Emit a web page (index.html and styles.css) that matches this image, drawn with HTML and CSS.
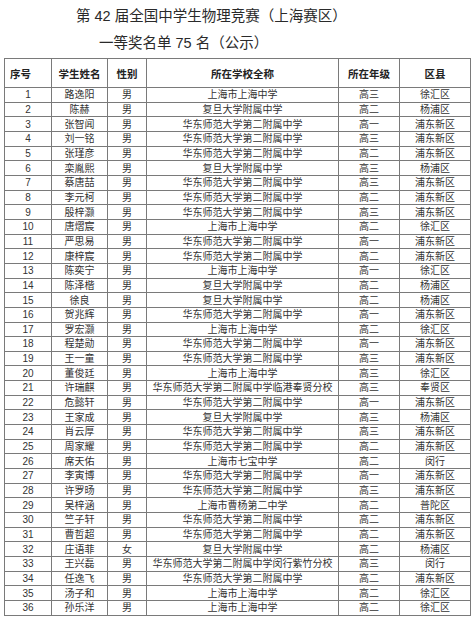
FILE: index.html
```html
<!DOCTYPE html>
<html lang="zh-CN">
<head>
<meta charset="utf-8">
<title>第 42 届全国中学生物理竞赛（上海赛区）一等奖名单</title>
<link rel="stylesheet" href="styles.css">
</head>
<body>
<div class="page">
  <h1 class="title t1">第 42 届全国中学生物理竞赛（上海赛区）</h1>
  <h2 class="title t2">一等奖名单 75 名（公示）</h2>
  <table class="list">
    <colgroup>
      <col class="c-no"><col class="c-name"><col class="c-sex"><col class="c-school"><col class="c-grade"><col class="c-area">
    </colgroup>
    <thead>
      <tr><th class="left">序号</th><th>学生姓名</th><th>性别</th><th>所在学校全称</th><th>所在年级</th><th>区县</th></tr>
    </thead>
    <tbody>
      <tr><td>1</td><td>路逸阳</td><td>男</td><td>上海市上海中学</td><td>高三</td><td>徐汇区</td></tr>
      <tr><td>2</td><td>陈赫</td><td>男</td><td>复旦大学附属中学</td><td>高二</td><td>杨浦区</td></tr>
      <tr><td>3</td><td>张智闻</td><td>男</td><td>华东师范大学第二附属中学</td><td>高一</td><td>浦东新区</td></tr>
      <tr><td>4</td><td>刘一铭</td><td>男</td><td>华东师范大学第二附属中学</td><td>高三</td><td>浦东新区</td></tr>
      <tr><td>5</td><td>张瑾彦</td><td>男</td><td>华东师范大学第二附属中学</td><td>高二</td><td>浦东新区</td></tr>
      <tr><td>6</td><td>栾胤熙</td><td>男</td><td>复旦大学附属中学</td><td>高三</td><td>杨浦区</td></tr>
      <tr><td>7</td><td>蔡唐喆</td><td>男</td><td>华东师范大学第二附属中学</td><td>高三</td><td>浦东新区</td></tr>
      <tr><td>8</td><td>李元柯</td><td>男</td><td>华东师范大学第二附属中学</td><td>高二</td><td>浦东新区</td></tr>
      <tr><td>9</td><td>殷梓灏</td><td>男</td><td>华东师范大学第二附属中学</td><td>高三</td><td>浦东新区</td></tr>
      <tr><td>10</td><td>唐熠宸</td><td>男</td><td>上海市上海中学</td><td>高二</td><td>徐汇区</td></tr>
      <tr><td>11</td><td>严思易</td><td>男</td><td>华东师范大学第二附属中学</td><td>高一</td><td>浦东新区</td></tr>
      <tr><td>12</td><td>康梓宸</td><td>男</td><td>华东师范大学第二附属中学</td><td>高二</td><td>浦东新区</td></tr>
      <tr><td>13</td><td>陈奕宁</td><td>男</td><td>上海市上海中学</td><td>高一</td><td>徐汇区</td></tr>
      <tr><td>14</td><td>陈泽楷</td><td>男</td><td>复旦大学附属中学</td><td>高二</td><td>杨浦区</td></tr>
      <tr><td>15</td><td>徐良</td><td>男</td><td>复旦大学附属中学</td><td>高二</td><td>杨浦区</td></tr>
      <tr><td>16</td><td>贺兆辉</td><td>男</td><td>华东师范大学第二附属中学</td><td>高一</td><td>浦东新区</td></tr>
      <tr><td>17</td><td>罗宏灏</td><td>男</td><td>上海市上海中学</td><td>高二</td><td>徐汇区</td></tr>
      <tr><td>18</td><td>程楚勋</td><td>男</td><td>华东师范大学第二附属中学</td><td>高一</td><td>浦东新区</td></tr>
      <tr><td>19</td><td>王一童</td><td>男</td><td>华东师范大学第二附属中学</td><td>高三</td><td>浦东新区</td></tr>
      <tr><td>20</td><td>董俊廷</td><td>男</td><td>上海市上海中学</td><td>高三</td><td>徐汇区</td></tr>
      <tr><td>21</td><td>许瑞麒</td><td>男</td><td>华东师范大学第二附属中学临港奉贤分校</td><td>高三</td><td>奉贤区</td></tr>
      <tr><td>22</td><td>危懿轩</td><td>男</td><td>华东师范大学第二附属中学</td><td>高一</td><td>浦东新区</td></tr>
      <tr><td>23</td><td>王家成</td><td>男</td><td>复旦大学附属中学</td><td>高三</td><td>杨浦区</td></tr>
      <tr><td>24</td><td>肖云厚</td><td>男</td><td>华东师范大学第二附属中学</td><td>高三</td><td>浦东新区</td></tr>
      <tr><td>25</td><td>周家耀</td><td>男</td><td>华东师范大学第二附属中学</td><td>高二</td><td>浦东新区</td></tr>
      <tr><td>26</td><td>席天佑</td><td>男</td><td>上海市七宝中学</td><td>高二</td><td>闵行</td></tr>
      <tr><td>27</td><td>李寅博</td><td>男</td><td>华东师范大学第二附属中学</td><td>高一</td><td>浦东新区</td></tr>
      <tr><td>28</td><td>许罗旸</td><td>男</td><td>华东师范大学第二附属中学</td><td>高三</td><td>浦东新区</td></tr>
      <tr><td>29</td><td>吴梓涵</td><td>男</td><td>上海市曹杨第二中学</td><td>高二</td><td>普陀区</td></tr>
      <tr><td>30</td><td>竺子轩</td><td>男</td><td>华东师范大学第二附属中学</td><td>高二</td><td>浦东新区</td></tr>
      <tr><td>31</td><td>曹哲超</td><td>男</td><td>华东师范大学第二附属中学</td><td>高二</td><td>浦东新区</td></tr>
      <tr><td>32</td><td>庄语菲</td><td>女</td><td>复旦大学附属中学</td><td>高二</td><td>杨浦区</td></tr>
      <tr><td>33</td><td>王兴磊</td><td>男</td><td>华东师范大学第二附属中学闵行紫竹分校</td><td>高三</td><td>闵行</td></tr>
      <tr><td>34</td><td>任逸飞</td><td>男</td><td>华东师范大学第二附属中学</td><td>高二</td><td>浦东新区</td></tr>
      <tr><td>35</td><td>汤子和</td><td>男</td><td>上海市上海中学</td><td>高二</td><td>徐汇区</td></tr>
      <tr><td>36</td><td>孙乐洋</td><td>男</td><td>上海市上海中学</td><td>高二</td><td>徐汇区</td></tr>
    </tbody>
  </table>
</div>
</body>
</html>
```
FILE: styles.css
```css
html, body {
  margin: 0;
  padding: 0;
  background: #ffffff;
}

body {
  font-family: "Liberation Sans", "Noto Sans CJK SC", sans-serif;
  color: #2e2e2e;
}

.page {
  width: 474px;
  padding: 0 0 0 4px;
  box-sizing: border-box;
}

.title {
  margin: 0;
  font-weight: normal;
  font-size: 14.5px;
  color: #2a2a2a;
  white-space: nowrap;
}

.t1 {
  padding: 6px 0 0 72px;
  line-height: 20px;
}

.t2 {
  padding: 7px 0 0 95px;
  line-height: 20px;
  height: 25px;
  box-sizing: content-box;
}

.list {
  border-collapse: collapse;
  table-layout: fixed;
  width: 466px;
  font-size: 10px;
}

.c-no { width: 47px; }
.c-name { width: 56px; }
.c-sex { width: 39px; }
.c-school { width: 192px; }
.c-grade { width: 61px; }
.c-area { width: 71px; }

.list th,
.list td {
  border: 1px solid #7a7a7a;
  padding: 0;
  text-align: center;
  white-space: nowrap;
  overflow: hidden;
}

.list th {
  height: 28px;
  font-weight: bold;
  font-size: 10.5px;
  color: #222;
}

.list th.left {
  text-align: left;
  padding-left: 5px;
}

.list td {
  height: 13.67px;
  line-height: 13px;
  color: #333;
}
```
